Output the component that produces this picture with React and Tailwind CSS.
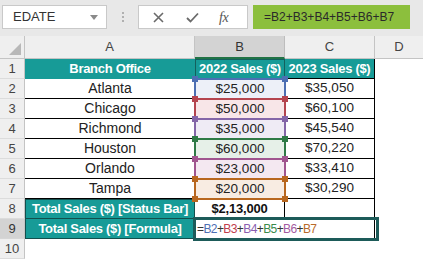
import React from 'react';

const ranges = [
  { line: '#4d6fb3', fill: '#edf0f8' },
  { line: '#b5454f', fill: '#f8e6e8' },
  { line: '#8466a8', fill: '#efebf5' },
  { line: '#2f7a46', fill: '#e6f0e8' },
  { line: '#a0558f', fill: '#f4e8f1' },
  { line: '#b8671f', fill: '#f8ece2' },
];

const rows = [
  ['Atlanta', '$25,000', '$35,050'],
  ['Chicago', '$50,000', '$60,100'],
  ['Richmond', '$35,000', '$45,540'],
  ['Houston', '$60,000', '$70,220'],
  ['Orlando', '$23,000', '$33,410'],
  ['Tampa', '$20,000', '$30,290'],
];

const formulaParts = [
  ['=', '#333'],
  ['B2', '#4d6fb3'],
  ['+', '#333'],
  ['B3', '#c03c4c'],
  ['+', '#333'],
  ['B4', '#8a5fb0'],
  ['+', '#333'],
  ['B5', '#3a8a4b'],
  ['+', '#333'],
  ['B6', '#a35aa0'],
  ['+', '#333'],
  ['B7', '#b86a2a'],
];

function RowNum({ n, active }) {
  return (
    <div
      className={
        'h-[20px] flex items-center justify-center text-[13px] border-r border-b ' +
        (active
          ? 'bg-[#d3d3d3] text-[#333] border-r-[#c4c4c4] border-b-[#d6d6d6]'
          : 'bg-[#efefef] text-[#444] border-r-[#c4c4c4] border-b-[#dcdcdc]')
      }
    >
      {n}
    </div>
  );
}

function Handle({ pos, color }) {
  return (
    <span
      className={'absolute w-[6px] h-[6px] ' + pos}
      style={{ backgroundColor: color }}
    />
  );
}

export default function App() {
  return (
    <div className="w-[423px] h-[261px] overflow-hidden bg-white font-['Liberation_Sans',Arial,sans-serif]">
      {/* formula bar */}
      <div className="h-[36px] bg-[#e8e8e8] flex items-start pt-[5px]">
        <div className="ml-[2px] w-[105px] h-[24px] bg-white border border-[#c9c9c9] flex items-center justify-between pl-[10px] pr-[8px]">
          <span className="text-[13px] text-[#333]">EDATE</span>
          <svg width="8" height="5" viewBox="0 0 8 5">
            <polygon points="0,0 8,0 4,5" fill="#8a8a8a" />
          </svg>
        </div>
        <div className="ml-[15px] mt-[7px] flex flex-col gap-[2px]">
          <span className="w-[2px] h-[2px] bg-[#b0b0b0]" />
          <span className="w-[2px] h-[2px] bg-[#b0b0b0]" />
          <span className="w-[2px] h-[2px] bg-[#b0b0b0]" />
        </div>
        <div className="ml-[14px] w-[110px] h-[24px] bg-white border border-[#c9c9c9] flex items-center">
          <svg className="ml-[14px]" width="11" height="11" viewBox="0 0 11 11">
            <path d="M1 1 L10 10 M10 1 L1 10" stroke="#6a6a6a" strokeWidth="1.6" />
          </svg>
          <svg className="ml-[22px]" width="13" height="11" viewBox="0 0 13 11">
            <path d="M1 6 L4.5 9.5 L12 1.5" stroke="#6a6a6a" strokeWidth="1.8" fill="none" />
          </svg>
          <span className="ml-[20px] text-[14px] italic text-[#555] font-['Liberation_Serif',serif] tracking-[-0.5px]">
            fx
          </span>
        </div>
        <div className="ml-[5px] w-[157px] h-[24px] bg-[#8cbf3d] flex items-center pl-[11px] text-[12px] text-[#2a2a2a]">
          =B2+B3+B4+B5+B6+B7
        </div>
      </div>

      {/* sheet */}
      <div className="grid grid-cols-[25px_170px_90px_90px_48px]">
        {/* header row */}
        <div className="h-[23px] bg-[#efefef] border-r border-b border-[#c4c4c4] flex items-end justify-end pr-[3px] pb-[3px]">
          <svg width="12" height="12" viewBox="0 0 12 12">
            <polygon points="12,0 12,12 0,12" fill="#b8b8b8" />
          </svg>
        </div>
        <div className="h-[23px] bg-[#efefef] border-r border-b border-[#c4c4c4] flex items-center justify-center text-[13px] text-[#444]">
          A
        </div>
        <div className="h-[23px] bg-[#d3d3d3] border-r border-[#bdbdbd] border-b-2 border-b-[#217346] flex items-center justify-center text-[13px] text-[#333]">
          B
        </div>
        <div className="h-[23px] bg-[#efefef] border-r border-b border-[#c4c4c4] flex items-center justify-center text-[13px] text-[#444]">
          C
        </div>
        <div className="h-[23px] bg-[#efefef] border-b border-[#c4c4c4] flex items-center justify-center text-[13px] text-[#444]">
          D
        </div>

        {/* row 1 */}
        <RowNum n={1} />
        <div className="h-[20px] bg-[#179b97] flex items-center justify-center text-[13px] font-bold text-white tracking-[-0.3px]">
          Branch Office
        </div>
        <div className="h-[20px] bg-[#179b97] border border-[#14605d] flex items-center justify-center text-[13px] font-bold text-white tracking-[-0.3px]">
          2022 Sales ($)
        </div>
        <div className="h-[20px] bg-[#179b97] border-r border-b border-black flex items-center justify-center text-[13px] font-bold text-white tracking-[-0.3px]">
          2023 Sales ($)
        </div>
        <div className="h-[20px]" />

        {/* rows 2-7 */}
        {rows.map((r, i) => {
          const rg = ranges[i];
          return (
            <React.Fragment key={r[0]}>
              <RowNum n={i + 2} />
              <div className="h-[20px] border-b border-black flex items-center justify-center text-[14px] text-[#222]">
                {r[0]}
              </div>
              <div
                className="relative h-[20px] flex items-center justify-center text-[13.5px] text-[#222]"
                style={{ backgroundColor: rg.fill }}
              >
                <div
                  className="absolute -left-px -top-px -right-px -bottom-px border-2"
                  style={{ borderColor: rg.line }}
                />
                <Handle pos="-left-[3px] -top-[3px]" color={rg.line} />
                <Handle pos="-right-[3px] -top-[3px]" color={rg.line} />
                <Handle pos="-left-[3px] -bottom-[3px]" color={rg.line} />
                <Handle pos="-right-[3px] -bottom-[3px]" color={rg.line} />
                <span className="relative">{r[1]}</span>
              </div>
              <div className="h-[20px] border-r border-b border-black flex items-center justify-center text-[13.5px] text-[#222]">
                {r[2]}
              </div>
              <div className="h-[20px]" />
            </React.Fragment>
          );
        })}

        {/* row 8 */}
        <RowNum n={8} />
        <div className="h-[20px] bg-[#179b97] border border-[#134f4d] flex items-center justify-center text-[13px] font-bold text-white tracking-[-0.3px]">
          Total Sales ($) [Status Bar]
        </div>
        <div className="h-[20px] border-r border-b border-black flex items-center justify-center text-[13px] font-bold text-[#111] tracking-[-0.2px]">
          $2,13,000
        </div>
        <div className="h-[20px] border-r border-b border-black" />
        <div className="h-[20px]" />

        {/* row 9 */}
        <RowNum n={9} active />
        <div className="h-[20px] bg-[#179b97] border-x border-b border-[#134f4d] flex items-center justify-center text-[13px] font-bold text-white tracking-[-0.3px]">
          Total Sales ($) [Formula]
        </div>
        <div className="relative h-[20px] flex items-center pl-[2px] whitespace-nowrap text-[12px] tracking-[-0.6px]">
          <div className="absolute -left-[2px] -top-[2px] w-[186px] h-[24px] border-[3px] border-[#1d5b59]" />
          <span className="relative">
            {formulaParts.map((p, i) => (
              <span key={i} style={{ color: p[1] }}>
                {p[0]}
              </span>
            ))}
          </span>
          <span className="relative ml-[2px] w-px h-[15px] bg-[#777]" />
        </div>
        <div className="h-[20px] border-r border-black" />
        <div className="h-[20px]" />

        {/* row 10 */}
        <RowNum n={10} />
        <div className="h-[20px]" />
        <div className="h-[20px]" />
        <div className="h-[20px]" />
        <div className="h-[20px]" />
      </div>
    </div>
  );
}
